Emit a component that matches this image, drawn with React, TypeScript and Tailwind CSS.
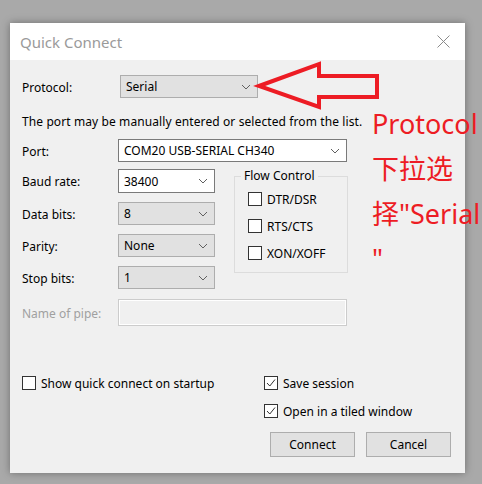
import React from 'react';

const ui = { fontFamily: '"Noto Sans", "Open Sans", sans-serif' };

function Chevron() {
  return (
    <svg width="10" height="6" viewBox="0 0 10 6" className="shrink-0">
      <polyline points="1,1 5,5 9,1" fill="none" stroke="#606060" strokeWidth="1" />
    </svg>
  );
}

function Combo({ value, w, h = 'h-[23px]', white = false }: { value: string; w: string; h?: string; white?: boolean }) {
  return (
    <div
      className={`${w} ${h} flex items-center justify-between pl-[5px] pr-[6px] border ${
        white ? 'bg-white border-[#7a7a7a]' : 'bg-[#e1e1e1] border-[#adadad]'
      }`}
    >
      <span className="text-[12px] text-black leading-none pt-[1px]">{value}</span>
      <Chevron />
    </div>
  );
}

function Check({ label, checked = false }: { label: string; checked?: boolean }) {
  return (
    <div className="flex items-center gap-[5px]">
      <div className="w-[14px] h-[14px] border border-[#333] bg-white flex items-center justify-center">
        {checked && (
          <svg width="12" height="12" viewBox="0 0 12 12">
            <polyline points="2,6 4.8,9 10,2.5" fill="none" stroke="#333" strokeWidth="1" />
          </svg>
        )}
      </div>
      <span className="text-[12px] text-black leading-none pt-[1px]">{label}</span>
    </div>
  );
}

function Row({ label, muted = false, children }: { label: string; muted?: boolean; children: React.ReactNode }) {
  return (
    <div className="flex items-center">
      <span className={`w-[96px] text-[12px] leading-none pt-[2px] ${muted ? 'text-[#a0a0a0]' : 'text-black'}`}>
        {label}
      </span>
      {children}
    </div>
  );
}

export default function App() {
  return (
    <div className="relative w-[482px] h-[484px] bg-[#a9a9a9] pt-[23px] pl-[10px] overflow-hidden" style={ui}>
      {/* dialog */}
      <div className="w-[455px] h-[450px] flex flex-col shadow-[0_0_8px_rgba(0,0,0,0.35)]">
        <div className="h-[37px] bg-white flex items-center justify-between pl-[10px] pr-[15px]">
          <span className="text-[15px] text-[#9a9a9a] pt-[2px]">Quick Connect</span>
          <svg width="13" height="13" viewBox="0 0 13 13">
            <path d="M0.5 0.5 L12.5 12.5 M12.5 0.5 L0.5 12.5" stroke="#8a8a8a" strokeWidth="1" />
          </svg>
        </div>

        <div className="flex-1 bg-[#f0f0f0] pl-[12px] pt-[15px] flex flex-col">
          <div className="flex items-center">
            <span className="w-[98px] text-[12px] text-black leading-none pt-[2px]">Protocol:</span>
            <Combo value="Serial" w="w-[138px]" />
          </div>

          <p className="mt-[15px] text-[12px] text-black leading-[16px] tracking-[0.1px] pt-[1px]">
            The port may be manually entered or selected from the list.
          </p>

          <div className="mt-[9px]">
            <Row label="Port:">
              <Combo value="COM20 USB-SERIAL CH340" w="w-[229px]" white />
            </Row>
          </div>

          <div className="flex mt-[7px]">
            <div className="flex flex-col gap-[9px]">
              <Row label="Baud rate:">
                <Combo value="38400" w="w-[97px]" h="h-[24px]" white />
              </Row>
              <Row label="Data bits:">
                <Combo value="8" w="w-[97px]" />
              </Row>
              <Row label="Parity:">
                <Combo value="None" w="w-[97px]" />
              </Row>
              <Row label="Stop bits:">
                <Combo value="1" w="w-[97px]" />
              </Row>
            </div>

            <div className="relative ml-[19px] mt-[7px] w-[114px] h-[97px] border border-[#dcdcdc] flex flex-col gap-[13px] pl-[13px] pt-[15px]">
              <span className="absolute -top-[9px] left-[6px] px-[3px] bg-[#f0f0f0] text-[12px] text-black leading-[16px]">
                Flow Control
              </span>
              <Check label="DTR/DSR" />
              <Check label="RTS/CTS" />
              <Check label="XON/XOFF" />
            </div>
          </div>

          <div className="mt-[10px]">
            <Row label="Name of pipe:" muted>
              <div className="w-[229px] h-[27px] border border-[#cccccc] shadow-[inset_0_0_0_1px_#ffffff]" />
            </Row>
          </div>

          <div className="flex mt-[50px]">
            <div className="w-[242px]">
              <Check label="Show quick connect on startup" />
            </div>
            <div className="flex flex-col gap-[14px]">
              <Check label="Save session" checked />
              <Check label="Open in a tiled window" checked />
            </div>
          </div>

          <div className="flex gap-[11px] mt-[14px] ml-[248px]">
            <button className="w-[85px] h-[25px] bg-[#e1e1e1] border border-[#adadad] text-[12px] text-black">
              Connect
            </button>
            <button className="w-[85px] h-[25px] bg-[#e1e1e1] border border-[#adadad] text-[12px] text-black">
              Cancel
            </button>
          </div>
        </div>
      </div>

      {/* red annotation */}
      <svg className="absolute left-0 top-0 pointer-events-none" width="482" height="484" viewBox="0 0 482 484">
        <polygon
          points="259,86 319,64 319,76 377,76 377,97 319,97 319,107"
          fill="none"
          stroke="#ed1c24"
          strokeWidth="4"
          strokeLinejoin="miter"
        />
      </svg>
      <div
        className="absolute left-[372px] top-[101px] text-[27px] leading-[45px] text-[#ed1c24] whitespace-nowrap"
        style={{ fontFamily: '"Noto Sans", "Noto Sans CJK SC", sans-serif' }}
      >
        <div>Protocol</div>
        <div>下拉选</div>
        <div>择"Serial</div>
        <div>"</div>
      </div>
    </div>
  );
}
